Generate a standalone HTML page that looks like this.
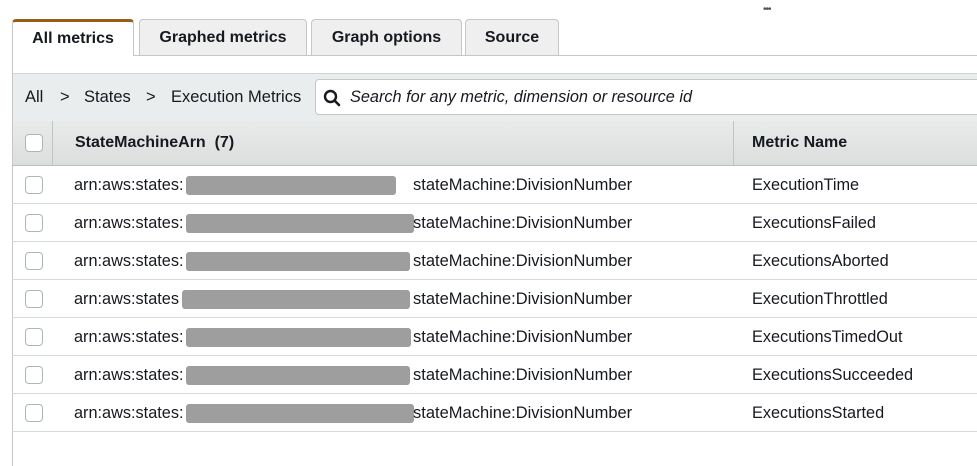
<!DOCTYPE html>
<html><head><style>
body{margin:0;width:977px;height:466px;background:#fff;font-family:"Liberation Sans",Arial,sans-serif;position:relative;overflow:hidden;color:#16191f}
.a{position:absolute}
.tab{position:absolute;top:19px;height:36px;box-sizing:border-box;border:1px solid #c6c6c6;border-bottom:none;background:#efefef;border-radius:4px 4px 0 0;font-weight:bold;font-size:16px;line-height:36px;text-align:center;color:#16191f}
.cb{position:absolute;left:25px;width:18px;height:18px;box-sizing:border-box;border:1px solid #aab7b8;border-radius:4px;background:#fff}
.row{position:absolute;left:12px;width:965px;height:38px;border-bottom:1px solid #d5dbdb;box-sizing:border-box;font-size:16.3px}
.row .t1{position:absolute;left:62px;top:10px}
.row .t3{position:absolute;left:401px;top:10px;font-size:16.5px}
.row .t2{position:absolute;left:740px;top:10px}
.blur{position:absolute;top:10px;height:19px;background:#9e9e9e;border-radius:3px}
.bc{position:absolute;top:88px;font-size:16.5px}
</style></head><body>
<div class="a" style="left:763px;top:4px;font-size:10px;color:#555;letter-spacing:-1px">•••</div>
<div class="a" style="left:12px;top:55px;width:965px;height:1px;background:#c6c6c6"></div>
<div class="tab" style="left:12px;width:122px;background:#fff;border-top:3px solid #9c5c17;line-height:33px;height:37px">All metrics</div>
<div class="tab" style="left:139px;width:168px">Graphed metrics</div>
<div class="tab" style="left:311px;width:151px">Graph options</div>
<div class="tab" style="left:465px;width:94px">Source</div>
<div class="a" style="left:12px;top:56px;width:1px;height:410px;background:#c6c6c6"></div>
<div class="a" style="left:13px;top:73px;width:964px;height:48px;background:#eaeded;border-top:1px solid #d0d5d5;border-bottom:1px solid #c6c6c6"></div>
<div class="bc" style="left:25px">All</div>
<div class="bc" style="left:60px">&gt;</div>
<div class="bc" style="left:84px">States</div>
<div class="bc" style="left:146px">&gt;</div>
<div class="bc" style="left:171px">Execution Metrics</div>
<div class="a" style="left:315px;top:79px;width:680px;height:36px;background:#fff;border:1px solid #c6c6c6;border-radius:4px;box-sizing:border-box"></div>
<svg class="a" style="left:323px;top:89px" width="18" height="18" viewBox="0 0 18 18"><circle cx="7.5" cy="7.5" r="5.5" fill="none" stroke="#16191f" stroke-width="2.4"/><path d="M11.5 11.5L16 16" stroke="#16191f" stroke-width="2.6" stroke-linecap="round"/></svg>
<div class="a" style="left:350px;top:88px;font-size:16.3px;font-style:italic;color:#16191f">Search for any metric, dimension or resource id</div>
<div class="a" style="left:13px;top:121px;width:964px;height:45px;background:linear-gradient(#e9ebeb,#dcdede);border-bottom:1px solid #b9bebe;box-sizing:border-box"></div>
<div class="a" style="left:52px;top:121px;width:1px;height:45px;background:#c0c4c4"></div>
<div class="a" style="left:733px;top:121px;width:1px;height:45px;background:#c0c4c4"></div>
<div class="cb" style="top:134px"></div>
<div class="a" style="left:75px;top:134px;font-size:16px;font-weight:bold">StateMachineArn &nbsp;(7)</div>
<div class="a" style="left:752px;top:134px;font-size:16px;font-weight:bold">Metric Name</div>

<div class="row" style="top:166px"><div class="cb" style="top:10px;left:13px"></div><div class="t1">arn:aws:states:</div><div class="blur" style="left:174px;width:210px"></div><div class="t3">stateMachine:DivisionNumber</div><div class="t2">ExecutionTime</div></div>
<div class="row" style="top:204px"><div class="cb" style="top:10px;left:13px"></div><div class="t1">arn:aws:states:</div><div class="blur" style="left:174px;width:228px"></div><div class="t3">stateMachine:DivisionNumber</div><div class="t2">ExecutionsFailed</div></div>
<div class="row" style="top:242px"><div class="cb" style="top:10px;left:13px"></div><div class="t1">arn:aws:states:</div><div class="blur" style="left:174px;width:224px"></div><div class="t3">stateMachine:DivisionNumber</div><div class="t2">ExecutionsAborted</div></div>
<div class="row" style="top:280px"><div class="cb" style="top:10px;left:13px"></div><div class="t1">arn:aws:states</div><div class="blur" style="left:170px;width:228px"></div><div class="t3">stateMachine:DivisionNumber</div><div class="t2">ExecutionThrottled</div></div>
<div class="row" style="top:318px"><div class="cb" style="top:10px;left:13px"></div><div class="t1">arn:aws:states:</div><div class="blur" style="left:174px;width:225px"></div><div class="t3">stateMachine:DivisionNumber</div><div class="t2">ExecutionsTimedOut</div></div>
<div class="row" style="top:356px"><div class="cb" style="top:10px;left:13px"></div><div class="t1">arn:aws:states:</div><div class="blur" style="left:174px;width:224px"></div><div class="t3">stateMachine:DivisionNumber</div><div class="t2">ExecutionsSucceeded</div></div>
<div class="row" style="top:394px"><div class="cb" style="top:10px;left:13px"></div><div class="t1">arn:aws:states:</div><div class="blur" style="left:174px;width:228px"></div><div class="t3">stateMachine:DivisionNumber</div><div class="t2">ExecutionsStarted</div></div>
</body></html>
